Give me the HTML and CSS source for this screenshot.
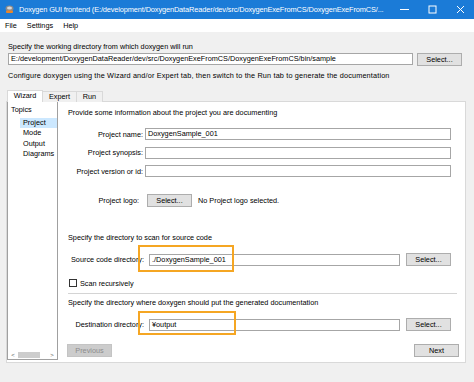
FILE: index.html
```html
<!DOCTYPE html>
<html>
<head>
<meta charset="utf-8">
<link rel="stylesheet" href="styles.css">
</head>
<body>
<div class="window">
  <div class="titlebar">
    <svg class="appicon" width="9" height="9" viewBox="0 0 9 9">
      <ellipse cx="4.5" cy="3.5" rx="4" ry="3" fill="#8a8a8a"/>
      <ellipse cx="4.5" cy="3" rx="2.5" ry="1.6" fill="#d8d8d8"/>
      <rect x="1" y="5.5" width="7" height="2.5" rx="1" fill="#e8862a"/>
    </svg>
    <span class="title">Doxygen GUI frontend (E:/development/DoxygenDataReader/dev/src/DoxygenExeFromCS/DoxygenExeFromCS/...</span>
    <div class="controls">
      <span class="ctl"><svg width="9" height="9" viewBox="0 0 9 9"><line x1="0" y1="4.5" x2="9" y2="4.5" stroke="#fff" stroke-width="1"/></svg></span>
      <span class="ctl"><svg width="9" height="9" viewBox="0 0 9 9"><rect x="1" y="1" width="7" height="7" fill="none" stroke="#fff" stroke-width="1"/></svg></span>
      <span class="ctl"><svg width="9" height="9" viewBox="0 0 9 9"><path d="M1 1L8 8M8 1L1 8" stroke="#fff" stroke-width="1"/></svg></span>
    </div>
  </div>
  <div class="menubar">
    <span>File</span><span>Settings</span><span>Help</span>
  </div>
  <div class="main">
    <div class="workdir">
      <div class="line">Specify the working directory from which doxygen will run</div>
      <div class="wdrow">
        <div class="input grow">E:/development/DoxygenDataReader/dev/src/DoxygenExeFromCS/DoxygenExeFromCS/bin/sample</div>
        <div class="btn">Select...</div>
      </div>
      <div class="line cfg">Configure doxygen using the Wizard and/or Expert tab, then switch to the Run tab to generate the documentation</div>
    </div>
    <div class="tabs">
      <div class="tab active">Wizard</div>
      <div class="tab">Expert</div>
      <div class="tab">Run</div>
    </div>
    <div class="panel">
      <div class="tree">
        <div class="topics">Topics</div>
        <div class="item sel">Project</div>
        <div class="item">Mode</div>
        <div class="item">Output</div>
        <div class="item">Diagrams</div>
        <div class="hscroll">
          <span class="arr">&lt;</span><span class="thumb"></span><span class="arr">&gt;</span>
        </div>
      </div>
      <div class="page">
        <div class="line intro">Provide some information about the project you are documenting</div>
        <div class="form">
          <div class="lbl">Project name:</div><div class="input">DoxygenSample_001</div>
          <div class="lbl">Project synopsis:</div><div class="input"></div>
          <div class="lbl">Project version or id:</div><div class="input"></div>
        </div>
        <div class="logorow">
          <div class="lbl logolbl">Project logo:</div>
          <div class="btn">Select...</div>
          <div class="nologo">No Project logo selected.</div>
        </div>
        <div class="line srchead">Specify the directory to scan for source code</div>
        <div class="dirrow src">
          <div class="lbl dirlbl">Source code directory:</div>
          <div class="input grow">./DoxygenSample_001</div>
          <div class="btn">Select...</div>
          <div class="mark mark-src"></div>
        </div>
        <div class="checkrow">
          <span class="check"></span><span>Scan recursively</span>
        </div>
        <div class="sep"></div>
        <div class="line dsthead">Specify the directory where doxygen should put the generated documentation</div>
        <div class="dirrow dst">
          <div class="lbl dirlbl">Destination directory:</div>
          <div class="input grow">¥output</div>
          <div class="btn">Select...</div>
          <div class="mark mark-dst"></div>
        </div>
        <div class="nav">
          <div class="btn disabled">Previous</div>
          <div class="btn">Next</div>
        </div>
      </div>
    </div>
  </div>
</div>
</body>
</html>
```

FILE: styles.css
```css
html, body {
  margin: 0;
  padding: 0;
}
body {
  width: 474px;
  height: 382px;
  overflow: hidden;
  background: #f0f0f0;
  font-family: "Liberation Sans", Arial, sans-serif;
  font-size: 7.3px;
  color: #000;
}
.window {
  display: flex;
  flex-direction: column;
  height: 382px;
}
.titlebar {
  height: 19px;
  background: #1b7bd7;
  color: #fff;
  display: flex;
  align-items: center;
  padding-left: 5px;
  font-size: 7.4px;
  letter-spacing: -0.13px;
}
.appicon {
  flex: none;
}
.title {
  margin-left: 5px;
  white-space: nowrap;
  flex: 1;
  min-width: 0;
}
.controls {
  display: flex;
  flex: none;
  margin-left: 6px;
}
.ctl {
  width: 28px;
  height: 19px;
  display: flex;
  align-items: center;
  justify-content: center;
}
.menubar {
  height: 13px;
  background: #fff;
  display: flex;
  align-items: center;
  gap: 10px;
  padding-left: 5px;
}
.main {
  padding: 0 8px 0 6px;
}
.workdir {
  padding: 0 4px 0 2px;
}
.line {
  height: 10px;
  line-height: 10px;
  white-space: nowrap;
}
.workdir > .line:first-child {
  margin-top: 10px;
}
.wdrow {
  display: flex;
  gap: 4px;
  margin-top: 1px;
}
.cfg {
  margin-top: 5px;
  letter-spacing: 0.15px;
}
.input {
  height: 12px;
  box-sizing: border-box;
  border: 1px solid #a6a6a6;
  background: #fff;
  line-height: 10px;
  padding-left: 2px;
  white-space: nowrap;
  overflow: hidden;
}
.grow {
  flex: 1;
}
.btn {
  width: 45px;
  height: 13px;
  box-sizing: border-box;
  border: 1px solid #adadad;
  background: #e1e1e1;
  text-align: center;
  line-height: 11px;
  flex: none;
}
.btn.disabled {
  background: #cccccc;
  border-color: #c4c4c4;
  color: #8d8d8d;
}
.tabs {
  display: flex;
  margin-top: 9px;
  height: 11px;
  padding-left: 1px;
  position: relative;
  z-index: 1;
}
.tab {
  box-sizing: border-box;
  height: 11px;
  line-height: 10px;
  margin-top: 1px;
  padding: 0 6px;
  border: 1px solid #d9d9d9;
  border-bottom: none;
  background: #f0f0f0;
}
.tab.active {
  margin-top: 0;
  height: 12px;
  background: #fff;
  width: 36px;
  text-align: center;
  padding: 0;
}
.tab:nth-child(2) { width: 34px; text-align: center; padding: 0; border-left: none; }
.tab:nth-child(3) { width: 26px; text-align: center; padding: 0; border-left: none; }
.panel {
  height: 262px;
  box-sizing: border-box;
  border: 1px solid #d9d9d9;
  background: #fff;
  display: flex;
  align-items: flex-start;
}
.tree {
  width: 51px;
  height: 259px;
  margin-top: -1px;
  box-sizing: border-box;
  border: 1px solid #a0a0a0;
  display: flex;
  flex-direction: column;
  padding-top: 3px;
}
.topics {
  padding-left: 3px;
  line-height: 10px;
}
.item {
  margin-left: 12px;
  padding-left: 3px;
  line-height: 10.3px;
  height: 10.3px;
}
.item.sel {
  background: #cce8ff;
  margin-top: 3px;
}
.hscroll {
  margin-top: auto;
  height: 7px;
  display: flex;
  align-items: center;
  font-size: 6px;
  color: #606060;
  margin-bottom: 1px;
}
.arr {
  width: 10px;
  text-align: center;
}
.thumb {
  width: 22px;
  height: 6px;
  background: #cdcdcd;
  margin-right: 7px;
}
.page {
  flex: 1;
  padding: 0 14px 0 10px;
}
.intro {
  margin-top: 6px;
}
.form {
  display: grid;
  grid-template-columns: 75px 1fr;
  column-gap: 2px;
  row-gap: 6.5px;
  margin-top: 10px;
  align-items: center;
}
.lbl {
  text-align: right;
  white-space: nowrap;
}
.logorow {
  display: flex;
  align-items: center;
  margin-top: 17px;
}
.logolbl {
  width: 71px;
}
.logorow .btn {
  margin-left: 8px;
}
.nologo {
  margin-left: 6px;
}
.srchead {
  margin-top: 26px;
}
.dirrow {
  display: flex;
  align-items: center;
  gap: 6px;
  position: relative;
  margin-top: 10px;
}
.dirlbl {
  width: 76px;
  margin-right: -1px;
}
.dirrow .input {
  height: 12px;
}
.mark {
  position: absolute;
  box-sizing: border-box;
  border: 2px solid #f5a623;
  pointer-events: none;
}
.mark-src {
  left: 70px;
  top: -8px;
  width: 96px;
  height: 27px;
}
.mark-dst {
  left: 70px;
  top: -7px;
  width: 98px;
  height: 24px;
}
.checkrow {
  display: flex;
  align-items: center;
  gap: 3px;
  margin-top: 12px;
  height: 10px;
  padding-left: 1px;
}
.check {
  width: 8px;
  height: 8px;
  box-sizing: border-box;
  border: 1px solid #333;
  background: #fff;
}
.sep {
  height: 1px;
  background: #d4d4d4;
  margin: 5px -6px 0 0;
}
.dsthead {
  margin-top: 4px;
}
.nav {
  display: flex;
  justify-content: space-between;
  margin: 13px -8px 0 -1px;
}
```
